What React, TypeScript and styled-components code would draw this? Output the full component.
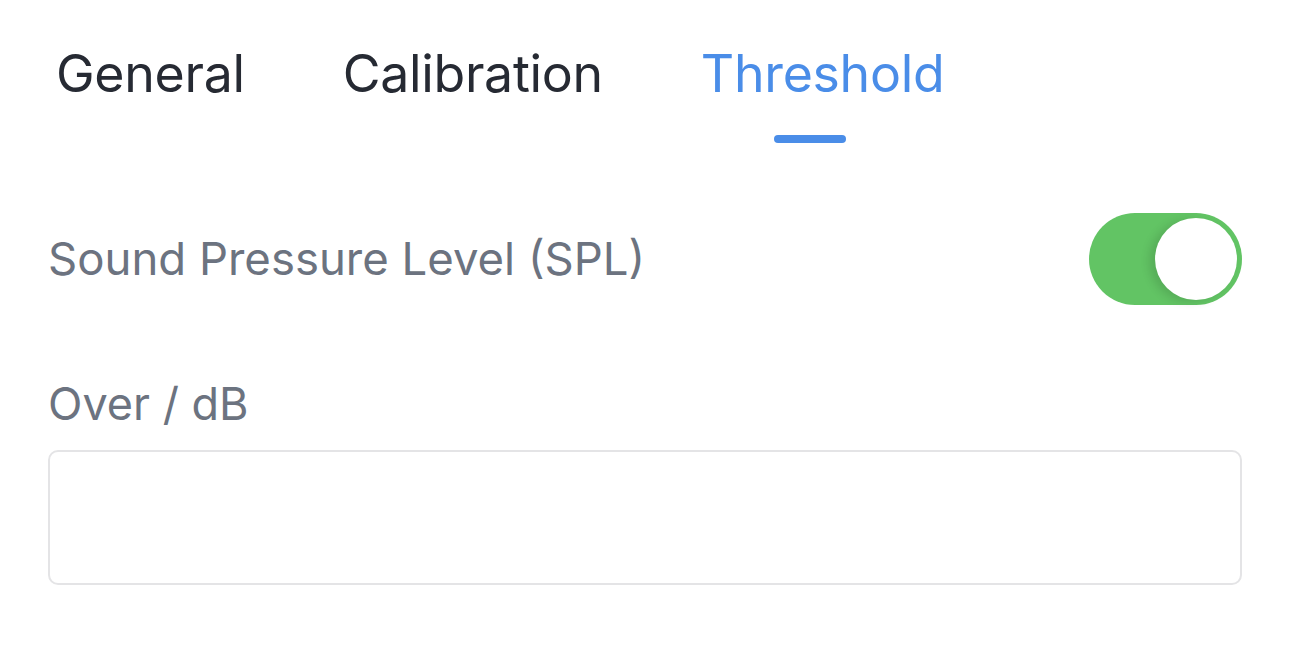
import React, { useState } from 'react';
import styled, { createGlobalStyle } from 'styled-components';

const GlobalStyle = createGlobalStyle`
    html, body {
        margin: 0;
        padding: 0;
        background: #ffffff;
    }

    body {
        font-family: Inter, "Liberation Sans", Arial, sans-serif;
        -webkit-font-smoothing: antialiased;
    }
`;

const tabs = ['General', 'Calibration', 'Threshold'];

const App = () => {
    const [active, setActive] = useState(2);
    const [enabled, setEnabled] = useState(true);
    const [over, setOver] = useState('');

    return (
        <>
            <GlobalStyle />
            <Page>
                <TabBar>
                    {tabs.map((name, i) => (
                        <Tab key={name} onClick={() => setActive(i)}>
                            <TabLabel $active={i === active}>{name}</TabLabel>
                            <Indicator $active={i === active} />
                        </Tab>
                    ))}
                </TabBar>

                <SwitchRow>
                    <RowLabel>Sound Pressure Level (SPL)</RowLabel>
                    <Switch $on={enabled} onClick={() => setEnabled(!enabled)} aria-pressed={enabled}>
                        <Knob />
                    </Switch>
                </SwitchRow>

                <Field>
                    <FieldLabel htmlFor="over">Over / dB</FieldLabel>
                    <Input
                        id="over"
                        value={over}
                        onChange={(e) => setOver(e.target.value)}
                    />
                </Field>
            </Page>
        </>
    );
};

const Page = styled.div`
    width: 1290px;
    height: 665px;
    box-sizing: border-box;
    padding: 41px 48px 0 48px;
    background: #ffffff;
`;

const TabBar = styled.div`
    display: flex;
    gap: 98px;
    padding-left: 8px;
`;

const Tab = styled.div`
    display: flex;
    flex-direction: column;
    align-items: center;
    cursor: pointer;
`;

const TabLabel = styled.span<{ $active: boolean }>`
    font-size: 51.8px;
    line-height: 64px;
    letter-spacing: -0.3px;
    color: ${(p) => (p.$active ? '#4a8de8' : '#262a33')};
`;

/* the bar sits a little left of the label's centre, as in the design */
const Indicator = styled.div<{ $active: boolean }>`
    width: 72px;
    height: 8px;
    margin-top: 30px;
    margin-right: 25px;
    border-radius: 4px;
    background: ${(p) => (p.$active ? '#4a8de8' : 'transparent')};
`;

const SwitchRow = styled.div`
    display: flex;
    align-items: center;
    justify-content: space-between;
    margin-top: 70px;
`;

const RowLabel = styled.span`
    font-size: 45.5px;
    line-height: 56px;
    color: #6c7380;
`;

const Switch = styled.button<{ $on: boolean }>`
    width: 153px;
    height: 92px;
    box-sizing: border-box;
    padding: 5px;
    border: none;
    border-radius: 46px;
    display: flex;
    align-items: center;
    justify-content: ${(p) => (p.$on ? 'flex-end' : 'flex-start')};
    background: ${(p) => (p.$on ? '#62c464' : '#e3e5e8')};
    cursor: pointer;
`;

const Knob = styled.span`
    width: 82px;
    height: 82px;
    border-radius: 50%;
    background: #ffffff;
    box-shadow: -6px 2px 10px rgba(0, 0, 0, 0.12);
`;

const Field = styled.div`
    display: flex;
    flex-direction: column;
    margin-top: 71px;
`;

const FieldLabel = styled.label`
    font-size: 45px;
    line-height: 56px;
    color: #6c7380;
`;

const Input = styled.input`
    margin-top: 18px;
    height: 135px;
    box-sizing: border-box;
    width: 100%;
    border: 2px solid #e4e4e6;
    border-radius: 10px;
    padding: 0 20px;
    font-size: 45px;
    font-family: inherit;
    color: #262a33;
    outline: none;
`;

export default App;
